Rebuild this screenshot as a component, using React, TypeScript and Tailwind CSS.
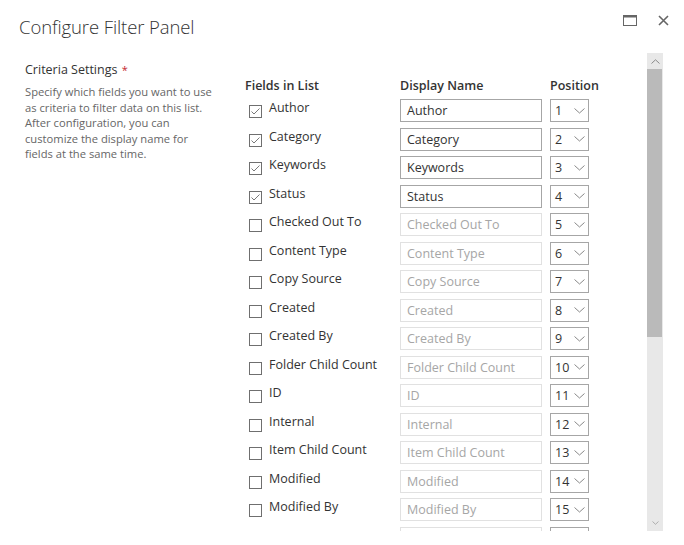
import React from "react";

type Row = { name: string; checked: boolean };

const rows: Row[] = [
  { name: "Author", checked: true },
  { name: "Category", checked: true },
  { name: "Keywords", checked: true },
  { name: "Status", checked: true },
  { name: "Checked Out To", checked: false },
  { name: "Content Type", checked: false },
  { name: "Copy Source", checked: false },
  { name: "Created", checked: false },
  { name: "Created By", checked: false },
  { name: "Folder Child Count", checked: false },
  { name: "ID", checked: false },
  { name: "Internal", checked: false },
  { name: "Item Child Count", checked: false },
  { name: "Modified", checked: false },
  { name: "Modified By", checked: false },
  { name: "Name", checked: false },
];

function CheckBox({ checked }: { checked: boolean }) {
  return (
    <div className="mt-[6px] ml-[4px] flex h-[13px] w-[13px] shrink-0 items-center justify-center border border-[#6f6f6f] bg-white">
      {checked && (
        <svg width="11" height="11" viewBox="0 0 11 11">
          <polyline points="1.5,5.5 4,8 9.5,2.5" fill="none" stroke="#6a6a6a" strokeWidth="0.9" />
        </svg>
      )}
    </div>
  );
}

function Chevron() {
  return (
    <svg width="11" height="6" viewBox="0 0 11 6" className="shrink-0">
      <polyline points="0.5,0.5 5.5,5 10.5,0.5" fill="none" stroke="#7a7a7a" strokeWidth="0.9" />
    </svg>
  );
}

export default function App() {
  return (
    <div
      className="relative h-[545px] w-[684px] overflow-hidden bg-white text-[#333333]"
      style={{ fontFamily: '"Open Sans", "Noto Sans", sans-serif' }}
    >
      {/* Header */}
      <div className="flex h-[53px] items-start">
        <div className="ml-[19px] mt-[13px] text-[18.5px] font-light leading-[28px] tracking-[-0.1px] text-[#333333]">
          Configure Filter Panel
        </div>
        <div className="ml-auto mr-[15px] mt-[15px] flex items-start gap-[21px]">
          <svg width="14" height="11" viewBox="0 0 14 11">
            <rect x="0.5" y="0.5" width="13" height="10" fill="none" stroke="#666" strokeWidth="1" />
            <rect x="0" y="0" width="14" height="2.5" fill="#666" />
          </svg>
          <svg width="11" height="11" viewBox="0 0 11 11">
            <path d="M1 1 L10 10 M10 1 L1 10" stroke="#666" strokeWidth="1.6" />
          </svg>
        </div>
      </div>

      {/* Body */}
      <div className="flex h-[478px]">
        <div className="flex-1 overflow-hidden">
          <div className="flex pl-[25px] pt-[6.5px]">
            {/* Left description */}
            <div className="w-[220px] shrink-0">
              <div className="text-[12.5px] leading-[20px] text-[#333333]">
                Criteria Settings <span className="ml-[1px] text-[11px] text-[#c4262e]">*</span>
              </div>
              <div className="mt-[4.5px] w-[189px] text-[11.2px] leading-[15.5px] text-[#666666]">
                Specify which fields you want to use as criteria to filter data on this list. After configuration, you can customize the display name for fields at the same time.
              </div>
            </div>

            {/* Table */}
            <div className="mt-[16.5px] w-[360px] shrink-0">
              <div className="flex h-[23px] text-[12.5px] font-semibold leading-[20px] text-[#333333]">
                <div className="w-[155px]">Fields in List</div>
                <div className="w-[150px]">Display Name</div>
                <div>Position</div>
              </div>
              {rows.map((r, i) => (
                <div key={r.name} className="flex h-[28.5px] items-start">
                  <div className="flex w-[155px] items-start">
                    <CheckBox checked={r.checked} />
                    <div className="ml-[7px] whitespace-nowrap text-[12.5px] leading-[18px] text-[#333333]">
                      {r.name}
                    </div>
                  </div>
                  <div className="w-[150px]">
                    <div
                      className={
                        r.checked
                          ? "flex h-[23px] w-[142px] items-center border border-[#a6a6a6] bg-white pl-[6px] pt-[2px] text-[12.5px] text-[#333333]"
                          : "flex h-[23px] w-[142px] items-center border border-[#e1e1e1] bg-white pl-[6px] pt-[2px] text-[12.5px] text-[#a6a6a6]"
                      }
                    >
                      {r.name}
                    </div>
                  </div>
                  <div className="flex h-[23px] w-[39px] items-center justify-between border border-[#a6a6a6] bg-white pl-[4px] pr-[3px] text-[12.5px] text-[#333333]">
                    <span className="pt-[2px]">{i + 1}</span>
                    <Chevron />
                  </div>
                </div>
              ))}
            </div>
          </div>
        </div>

        {/* Scrollbar */}
        <div className="mr-[21px] flex w-[16px] shrink-0 flex-col bg-[#e8e8e8]">
          <div className="flex h-[16px] items-center justify-center">
            <svg width="9" height="5" viewBox="0 0 9 5">
              <polyline points="0.5,4.5 4.5,0.8 8.5,4.5" fill="none" stroke="#8a8a8a" strokeWidth="1" />
            </svg>
          </div>
          <div className="h-[268px] w-[15px] bg-[#bababa]" />
          <div className="flex-1" />
          <div className="flex h-[16px] items-center justify-center">
            <svg width="7" height="4" viewBox="0 0 7 4">
              <polyline points="0.5,0.5 3.5,3.3 6.5,0.5" fill="none" stroke="#a0a0a0" strokeWidth="0.8" />
            </svg>
          </div>
        </div>
      </div>
    </div>
  );
}
